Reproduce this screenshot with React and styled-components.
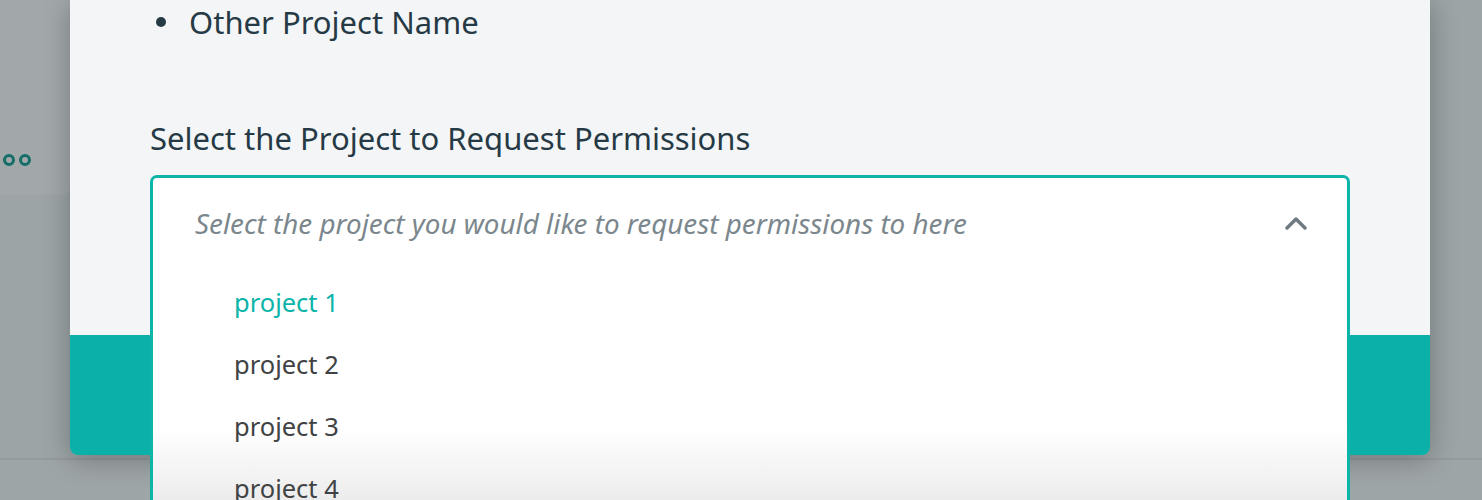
import React from "react";
import styled, { createGlobalStyle } from "styled-components";

const GlobalStyle = createGlobalStyle`
  html, body {
    margin: 0;
    padding: 0;
    background: #ebedee;
    font-family: "Noto Sans", "Open Sans", sans-serif;
  }
  * { box-sizing: border-box; }
`;

const Screen = styled.div`
  position: relative;
  width: 1482px;
  height: 500px;
  overflow: hidden;
  background: #f2f4f5;
`;

const Page = styled.div`
  display: flex;
  flex-direction: column;
  height: 100%;
`;

const PageTop = styled.div`
  display: flex;
  height: 458px;
`;

const SideCard = styled.div`
  width: 70px;
  height: 195px;
  background: #fbfcfc;
  border-bottom-right-radius: 8px;
  display: flex;
  align-items: flex-end;
  padding: 0 0 29px 3px;
  gap: 4px;
`;

const Dot = styled.span`
  width: 12px;
  height: 12px;
  border-radius: 50%;
  border: 3.5px solid #0a968e;
`;

const PageRow = styled.div`
  flex: 1;
  border-top: 2px solid #e2e5e6;
  background: #f5f6f7;
`;

const Overlay = styled.div`
  position: absolute;
  inset: 0;
  background: rgba(38, 52, 58, 0.42);
`;

const Modal = styled.div`
  position: absolute;
  left: 70px;
  top: 0;
  width: 1360px;
  display: flex;
  flex-direction: column;
  border-radius: 0 0 8px 8px;
  box-shadow: 0 4px 28px rgba(0, 0, 0, 0.28);
`;

const Body = styled.div`
  background: #f4f5f7;
  padding: 0 80px 67px;
  display: flex;
  flex-direction: column;
`;

const List = styled.ul`
  margin: 0;
  padding: 0;
  list-style: none;
  color: #263a46;
  font-size: 31px;
  line-height: 44px;
`;

const Item = styled.li`
  display: flex;
  align-items: center;
  gap: 23px;
  &::before {
    content: "";
    width: 10px;
    height: 10px;
    margin-left: 6px;
    border-radius: 50%;
    background: #263a46;
  }
`;

const Label = styled.div`
  margin-top: 72px;
  color: #263a46;
  font-size: 31px;
  line-height: 44px;
`;

const Select = styled.div`
  position: relative;
  margin-top: 15px;
`;

const Control = styled.div`
  height: 93px;
  display: flex;
  align-items: center;
  justify-content: space-between;
  padding: 0 39px 0 42px;
  background: #fff;
  border: 3px solid #0cb4a9;
  border-bottom: none;
  border-radius: 7px 7px 0 0;
`;

const Placeholder = styled.span`
  font-style: italic;
  font-size: 27.8px;
  color: #7b878d;
`;

const Menu = styled.ul`
  position: absolute;
  left: 0;
  right: 0;
  top: 93px;
  height: 250px;
  margin: 0;
  padding: 3px 0 0;
  list-style: none;
  border: 3px solid #0cb4a9;
  border-top: none;
  background: linear-gradient(to bottom, #fff 0, #fff 160px, #ececec 232px);
  z-index: 2;
`;

const Option = styled.li`
  height: 62px;
  display: flex;
  align-items: center;
  padding-left: 81px;
  font-size: 25.5px;
  color: ${(props) => (props.active ? "#0bb4a9" : "#404244")};
`;

const Footer = styled.div`
  height: 120px;
  background: #0bb0a8;
  border-radius: 0 0 8px 8px;
`;

const Chevron = () => (
  <svg width="24" height="14" viewBox="0 0 24 14" fill="none">
    <path d="M3 12 L12 3 L21 12" stroke="#6f7a80" strokeWidth="3.4" strokeLinecap="round" strokeLinejoin="round" />
  </svg>
);

const projects = ["project 1", "project 2", "project 3", "project 4"];

const App = () => {
  return (
    <Screen>
      <GlobalStyle />
      <Page>
        <PageTop>
          <SideCard>
            <Dot />
            <Dot />
          </SideCard>
        </PageTop>
        <PageRow />
      </Page>
      <Overlay />
      <Modal>
        <Body>
          <List>
            <Item>Other Project Name</Item>
          </List>
          <Label>Select the Project to Request Permissions</Label>
          <Select>
            <Control>
              <Placeholder>Select the project you would like to request permissions to here</Placeholder>
              <Chevron />
            </Control>
            <Menu>
              {projects.map((p, i) => (
                <Option key={p} active={i === 0}>
                  {p}
                </Option>
              ))}
            </Menu>
          </Select>
        </Body>
        <Footer />
      </Modal>
    </Screen>
  );
};

export default App;
